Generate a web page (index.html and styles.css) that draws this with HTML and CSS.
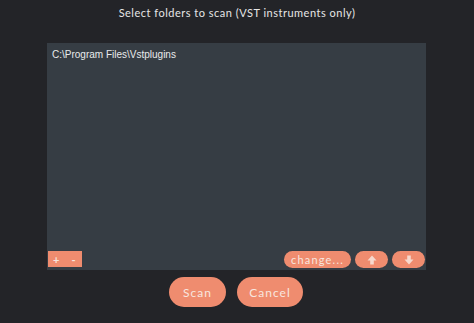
FILE: index.html
```html
<!DOCTYPE html>
<html>
<head>
<meta charset="utf-8">
<link rel="stylesheet" href="styles.css">
</head>
<body>
<div class="title">Select folders to scan (VST instruments only)</div>
<div class="panel">
  <div class="list">
    <div class="item">C:\Program Files\Vstplugins</div>
  </div>
  <div class="toolbar">
    <div class="pm"><span>+</span><span>-</span></div>
    <div class="right">
      <div class="pill change">change...</div>
      <div class="pill arrow"><svg width="10" height="10" viewBox="0 0 10 10"><path d="M5 0.5 L9.5 5.5 H6.8 V9.5 H3.2 V5.5 H0.5 Z" fill="#f6d9ce"/></svg></div>
      <div class="pill arrow"><svg width="10" height="10" viewBox="0 0 10 10"><path d="M5 9.5 L9.5 4.5 H6.8 V0.5 H3.2 V4.5 H0.5 Z" fill="#f6d9ce"/></svg></div>
    </div>
  </div>
</div>
<div class="actions">
  <div class="btn scan">Scan</div>
  <div class="btn cancel">Cancel</div>
</div>
</body>
</html>
```
FILE: styles.css
```css
html, body {
  margin: 0;
  padding: 0;
  background: #232428;
  width: 474px;
  height: 323px;
  overflow: hidden;
}
.title {
  height: 43px;
  box-sizing: border-box;
  padding-top: 6px;
  text-align: center;
  color: #e6e6e6;
  font-family: "Lato", sans-serif;
  font-size: 11px;
  letter-spacing: 0.5px;
}
.panel {
  margin: 0 48px 0 47px;
  height: 227px;
  background: #363d44;
  display: flex;
  flex-direction: column;
  justify-content: space-between;
}
.list {
  padding: 5px 5px;
}
.item {
  color: #e9ebec;
  font-family: "Liberation Sans", sans-serif;
  font-size: 10px;
  line-height: 13px;
}
.toolbar {
  display: flex;
  justify-content: space-between;
  align-items: flex-end;
  padding: 0 1px 3px 1px;
}
.pm {
  width: 34px;
  height: 16px;
  background: #ef8c6f;
  display: flex;
  align-items: center;
  gap: 12px;
  padding-left: 5px;
  box-sizing: border-box;
  color: #f8e6df;
  font-family: "Lato", sans-serif;
  font-size: 11px;
  font-weight: bold;
}
.right {
  display: flex;
  gap: 4px;
  margin-bottom: -1px;
}
.pill {
  height: 17px;
  border-radius: 9px;
  background: #ef8c6f;
  display: flex;
  align-items: center;
  justify-content: center;
  box-sizing: border-box;
}
.change {
  width: 67px;
  color: #f8e6df;
  font-family: "Lato", sans-serif;
  font-size: 11px;
  letter-spacing: 1.2px;
}
.arrow {
  width: 33px;
}
.actions {
  display: flex;
  justify-content: center;
  gap: 11px;
  margin-top: 7px;
  padding-right: 2px;
}
.btn {
  height: 30px;
  border-radius: 15px;
  background: #ef8c6f;
  color: #f8e6df;
  font-family: "Lato", sans-serif;
  font-size: 12px;
  letter-spacing: 1px;
  display: flex;
  align-items: center;
  justify-content: center;
}
.scan { width: 57px; }
.cancel { width: 66px; }
```
